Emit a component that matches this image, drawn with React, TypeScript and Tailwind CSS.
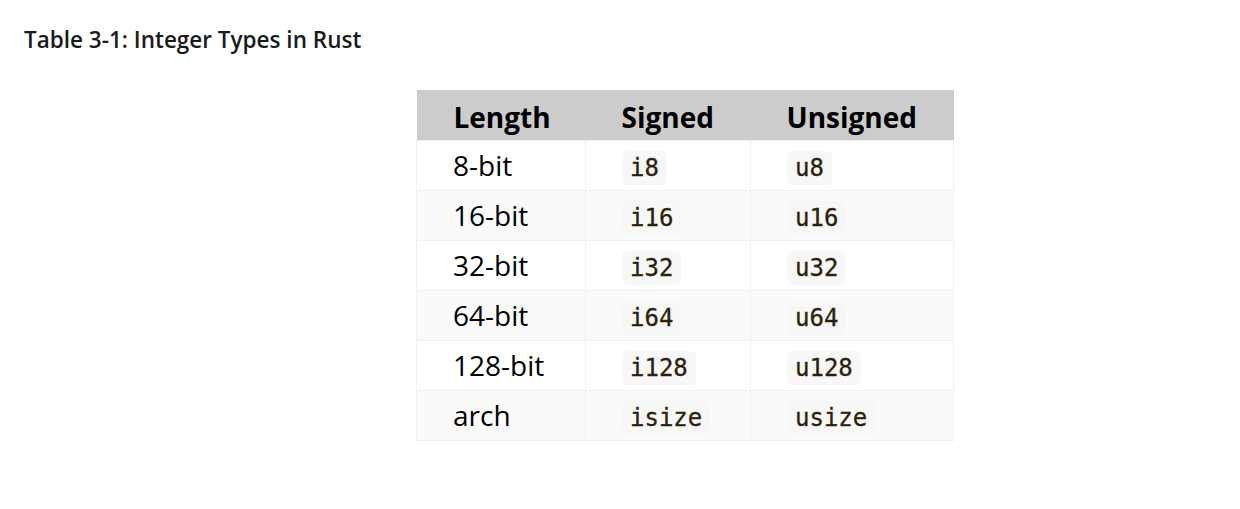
const rows: [string, string, string][] = [
  ["8-bit", "i8", "u8"],
  ["16-bit", "i16", "u16"],
  ["32-bit", "i32", "u32"],
  ["64-bit", "i64", "u64"],
  ["128-bit", "i128", "u128"],
  ["arch", "isize", "usize"],
]

function Code({ children }: { children: string }) {
  return (
    <code className="rounded-[6px] bg-[#f6f7f6] px-[8px] py-[3px] font-['DejaVu_Sans_Mono',monospace] text-[24px] leading-[30px] text-[#2e1f0c] [-webkit-text-stroke:0.3px_#2e1f0c]">
      {children}
    </code>
  )
}

export default function App() {
  return (
    <div className="h-[509px] w-[1240px] bg-white font-['Open_Sans',sans-serif] text-black">
      <div className="pl-[24px] pt-[25px]">
        <p className="text-[22.5px] font-semibold leading-[30px] text-[#1a1a1a]">Table 3-1: Integer Types in Rust</p>
      </div>

      <div className="pl-[416px] pt-[35px]">
        <table className="border-collapse text-[28px] leading-[38px]">
          <thead>
            <tr className="h-[50px] bg-[#cccccc]">
              <th className="w-[169px] pl-[37px] pt-[4px] text-left font-bold">Length</th>
              <th className="w-[165px] pl-[36px] pt-[4px] text-left font-bold">Signed</th>
              <th className="w-[203px] pl-[36px] pt-[4px] text-left font-bold">Unsigned</th>
            </tr>
          </thead>
          <tbody>
            {rows.map((r, i) => (
              <tr key={r[0]} className={i % 2 === 1 ? "h-[50px] bg-[#fafafa]" : "h-[50px] bg-white"}>
                <td className="border border-[#f0f0f0] pl-[36px]">{r[0]}</td>
                <td className="border border-[#f0f0f0] pl-[36px]"><Code>{r[1]}</Code></td>
                <td className="border border-[#f0f0f0] pl-[36px]"><Code>{r[2]}</Code></td>
              </tr>
            ))}
          </tbody>
        </table>
      </div>
    </div>
  )
}
